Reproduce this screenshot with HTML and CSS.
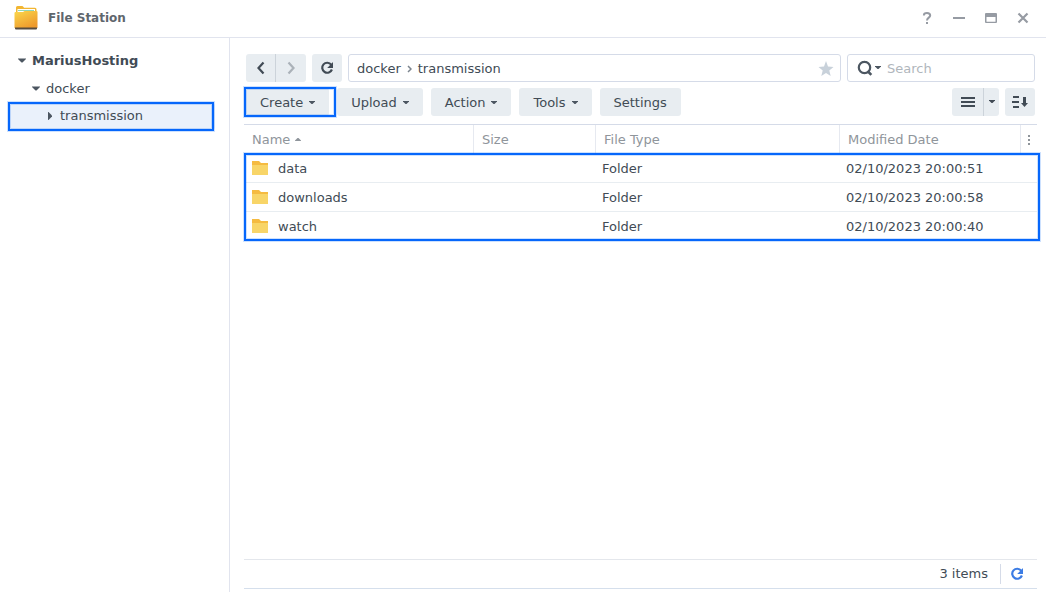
FILE: index.html
```html
<!DOCTYPE html>
<html lang="en">
<head>
<meta charset="utf-8">
<title>File Station</title>
<meta name="viewport" content="width=device-width, initial-scale=1">
<link rel="stylesheet" href="styles.css">
</head>
<body>
<div class="window">
  <header class="titlebar">
    <svg class="app-icon" width="24" height="24" viewBox="0 0 24 24" aria-hidden="true">
      <defs>
        <linearGradient id="front" x1="0" y1="0" x2=".6" y2="1">
          <stop offset="0" stop-color="#fbd84c"/>
          <stop offset="1" stop-color="#ee9a2c"/>
        </linearGradient>
      </defs>
      <path d="M2 1.500Q2 0 3.500 0H8q1 0 1.500 1l.5.800H21q1.500 0 1.500 1.500V12H2Z" fill="#f2b632"/>
      <path d="M3.500 3H21V8H3.500Z" fill="#fff"/>
      <path d="M4 4.500H20" stroke="#8fd6b8"/>
      <path d="M.5 7q0-1 1-1H9l1.500-1H22.500q1 0 1 1L23.500 22H.5Z" fill="url(#front)"/>
      <path d="M1 21.500H23v1q0 1-1 1H2q-1 0-1-1Z" fill="#574c40"/>
    </svg>
    <h1 class="title">File Station</h1>
    <div class="window-controls">
      <button class="window-button" type="button" aria-label="Help">
        <svg width="16" height="16" viewBox="0 0 16 16"><path d="M4.900 5.500V5.200C4.900 3.800 6.200 3 8 3s3.200.9 3.200 2.500C11.200 7.600 8 7.700 8 10.500" fill="none" stroke="currentColor" stroke-width="2"/><path d="M7 12h2v2H7z" fill="currentColor"/></svg>
      </button>
      <button class="window-button" type="button" aria-label="Minimize">
        <svg width="16" height="16" viewBox="0 0 16 16"><path d="M2 7h12v2H2z" fill="currentColor"/></svg>
      </button>
      <button class="window-button" type="button" aria-label="Maximize">
        <svg width="16" height="16" viewBox="0 0 16 16"><path fill-rule="evenodd" d="M3 3h10q1 0 1 1v8q0 1-1 1H3q-1 0-1-1V4q0-1 1-1ZM3.500 7v4.700h9V7Z" fill="currentColor"/></svg>
      </button>
      <button class="window-button" type="button" aria-label="Close">
        <svg width="16" height="16" viewBox="0 0 16 16"><path d="M3.500 3.500l9 9M12.500 3.500l-9 9" stroke="currentColor" stroke-width="2.200"/></svg>
      </button>
    </div>
  </header>

  <div class="body">
    <nav class="sidebar" aria-label="Folders">
      <ul class="tree">
        <li><a class="node node-root" href="#"><svg class="twisty" width="8" height="8" viewBox="0 0 8 8"><path d="M0 1.500h8v.5L4.500 5.500h-1L0 2Z"/></svg>MariusHosting</a></li>
        <li><a class="node node-share" href="#"><svg class="twisty" width="8" height="8" viewBox="0 0 8 8"><path d="M0 1.500h8v.5L4.500 5.500h-1L0 2Z"/></svg>docker</a></li>
        <li><a class="node node-child marked" href="#" aria-current="true"><svg class="twisty" width="8" height="8" viewBox="0 0 8 8"><path d="M2 0h.5L6 3.500v1L2.500 8H2Z"/></svg>transmission</a></li>
      </ul>
    </nav>

    <main class="content">
      <div class="toolbars">
        <div class="bar">
          <div class="split">
            <button class="button icon-button" type="button" aria-label="Back"><svg width="16" height="16" viewBox="0 0 16 16"><path d="M10.500 2.500 5.500 8l5 5.500" fill="none" stroke="currentColor" stroke-width="2.200"/></svg></button>
            <button class="button icon-button" type="button" aria-label="Forward" disabled><svg width="16" height="16" viewBox="0 0 16 16"><path d="M5.500 2.500l5 5.500-5 5.500" fill="none" stroke="currentColor" stroke-width="2.200"/></svg></button>
          </div>
          <button class="button icon-button" type="button" aria-label="Refresh"><svg width="16" height="16" viewBox="0 0 16 16"><path d="M12.200 4.700A5 5 0 1 0 12.900 9.500" fill="none" stroke="currentColor" stroke-width="2.200"/><path d="M14 2v6H8.200Z" fill="currentColor"/></svg></button>
          <div class="path">
            <a class="crumb" href="#">docker</a>
            <svg class="crumb-arrow" width="5" height="8" viewBox="0 0 5 8"><path d="M1 1l3 3-3 3" fill="none" stroke="currentColor" stroke-width="1.500"/></svg>
            <a class="crumb" href="#">transmission</a>
            <button class="star" type="button" aria-label="Add to favorites"><svg width="16" height="16" viewBox="0 0 16 16"><path d="M8 0l2 5.500 5.500.400-4.200 3.500L12.700 15 8 12 3.300 15l1.400-5.600L.5 5.900 6 5.500Z" fill="currentColor"/></svg></button>
          </div>
          <div class="search">
            <button class="search-options" type="button" aria-label="Search options">
              <svg width="16" height="16" viewBox="0 0 16 16"><circle cx="7.500" cy="7.500" r="5.700" fill="none" stroke="currentColor" stroke-width="2.200"/><path d="M10.500 11l3.800 3.800" stroke="currentColor" stroke-width="2.600"/></svg>
              <svg class="caret" width="6" height="4" viewBox="0 0 6 4"><path d="M0 0h6v.5L3.500 3h-1L0 .5Z"/></svg>
            </button>
            <input class="search-input" type="text" placeholder="Search" aria-label="Search">
          </div>
        </div>

        <div class="bar">
          <div class="actions">
            <button class="button marked" type="button">Create<svg class="caret" width="6" height="4" viewBox="0 0 6 4"><path d="M0 0h6v.5L3.500 3h-1L0 .5Z"/></svg></button>
            <button class="button" type="button">Upload<svg class="caret" width="6" height="4" viewBox="0 0 6 4"><path d="M0 0h6v.5L3.500 3h-1L0 .5Z"/></svg></button>
            <button class="button" type="button">Action<svg class="caret" width="6" height="4" viewBox="0 0 6 4"><path d="M0 0h6v.5L3.500 3h-1L0 .5Z"/></svg></button>
            <button class="button" type="button">Tools<svg class="caret" width="6" height="4" viewBox="0 0 6 4"><path d="M0 0h6v.5L3.500 3h-1L0 .5Z"/></svg></button>
            <button class="button" type="button">Settings</button>
          </div>
          <div class="split">
            <button class="button view-button" type="button" aria-label="List view"><svg width="14" height="10" viewBox="0 0 14 10"><path d="M0 0h14v2H0zM0 4h14v2H0zM0 8h14v2H0z" fill="currentColor"/></svg></button>
            <button class="button view-menu" type="button" aria-label="View options"><svg width="6" height="4" viewBox="0 0 6 4"><path d="M0 0h6v.5L3.500 3h-1L0 .5Z" fill="currentColor"/></svg></button>
          </div>
          <button class="button icon-button" type="button" aria-label="Sort"><svg width="16" height="12" viewBox="0 0 16 12"><path d="M1 0h6v2H1zM0 5h7v2H0zM1 10h6v2H1zM11 1h3v6h2l-3.500 4L9 7h2Z" fill="currentColor"/></svg></button>
        </div>
      </div>

      <div class="listing">
        <table class="files">
          <colgroup>
            <col><col class="col-size"><col class="col-type"><col class="col-date"><col class="col-menu">
          </colgroup>
          <thead>
            <tr>
              <th scope="col">Name<svg class="sort" width="6" height="4" viewBox="0 0 6 4"><path d="M0 4v-.5L2.500 1h1L6 3.500V4Z"/></svg></th>
              <th scope="col">Size</th>
              <th scope="col">File Type</th>
              <th scope="col">Modified Date</th>
              <th scope="col" class="menu-cell"><button class="columns" type="button" aria-label="Choose columns"><svg width="2" height="10" viewBox="0 0 2 10"><path d="M0 0h2v2H0zM0 4h2v2H0zM0 8h2v2H0z" fill="currentColor"/></svg></button></th>
            </tr>
          </thead>
          <tbody>
            <tr>
              <td><span class="name"><svg width="16" height="16" viewBox="0 0 16 16"><path d="M0 0h7l2 2h7v4H0Z" fill="#f5bb41"/><path d="M0 4h16v10H0z" fill="#f8d568"/></svg>data</span></td>
              <td></td><td>Folder</td><td colspan="2">02/10/2023 20:00:51</td>
            </tr>
            <tr>
              <td><span class="name"><svg width="16" height="16" viewBox="0 0 16 16"><path d="M0 0h7l2 2h7v4H0Z" fill="#f5bb41"/><path d="M0 4h16v10H0z" fill="#f8d568"/></svg>downloads</span></td>
              <td></td><td>Folder</td><td colspan="2">02/10/2023 20:00:58</td>
            </tr>
            <tr>
              <td><span class="name"><svg width="16" height="16" viewBox="0 0 16 16"><path d="M0 0h7l2 2h7v4H0Z" fill="#f5bb41"/><path d="M0 4h16v10H0z" fill="#f8d568"/></svg>watch</span></td>
              <td></td><td>Folder</td><td colspan="2">02/10/2023 20:00:40</td>
            </tr>
          </tbody>
        </table>
      </div>

      <footer class="status">
        <span class="count">3 items</span>
        <button class="reload" type="button" aria-label="Reload"><svg width="16" height="16" viewBox="0 0 16 16"><path d="M12.200 4.700A5 5 0 1 0 12.900 9.500" fill="none" stroke="currentColor" stroke-width="2.200"/><path d="M14 2v6H8.200Z" fill="currentColor"/></svg></button>
      </footer>
    </main>
  </div>
</div>
</body>
</html>
```

FILE: styles.css
```css
* { box-sizing: border-box; }

body {
  margin: 0;
  background: #fff;
  color: #414b55;
  font: 13px/20px Verdana, "DejaVu Sans", sans-serif;
}

button, input {
  margin: 0;
  padding: 0;
  border: 0;
  background: none;
  color: inherit;
  font: inherit;
}

a { color: inherit; text-decoration: none; }
svg { display: block; flex: none; }

.window { display: flex; flex-direction: column; min-height: 100vh; }

.titlebar {
  display: flex;
  align-items: center;
  height: 38px;
  padding: 0 15px 2px 14px;
  border-bottom: 1px solid #e1e4ee;
}

.title {
  flex: 1;
  margin: 0 0 0 10px;
  color: #5f666d;
  font-size: 12px;
  line-height: 20px;
}

.window-controls { display: flex; gap: 16px; color: #969ba3; }

.body { display: flex; flex: 1; }

.sidebar {
  flex: none;
  width: 230px;
  padding: 9px 14px 0 10px;
  border-right: 1px solid #e1e4ee;
}

.tree { margin: 0; padding: 0; list-style: none; }

.node {
  display: flex;
  align-items: center;
  gap: 6px;
  height: 28px;
  border-radius: 3px;
}

.node-root { padding-left: 8px; font-weight: bold; }
.node-share { padding-left: 22px; }
.node-child { height: 27px; padding: 0 0 1px 36px; background: #eaf1fb; }
.twisty { fill: #4c5661; }

/* Blue frame that calls out an element without affecting its layout. */
.marked { position: relative; }
.marked::after {
  position: absolute;
  border: 2px solid #0667fb;
  box-shadow: 0 0 0 1px #0667fb33, inset 0 0 0 1px #0667fb33;
  content: "";
}

.node-child.marked::after { inset: -1px 1px -1px -2px; }
.button.marked::after { inset: -1px -7px -1px -2px; }

.content {
  display: flex;
  flex: 1;
  flex-direction: column;
  min-width: 0;
  padding: 16px 9px 3px 14px;
}

.toolbars {
  display: flex;
  flex-direction: column;
  gap: 6px;
  padding: 0 2px 8px;
}

.bar { display: flex; gap: 6px; }
.actions { display: flex; flex: 1; gap: 8px; }

.button {
  display: flex;
  align-items: center;
  justify-content: center;
  height: 28px;
  padding: 0 14px;
  border-radius: 3px;
  background: #e8edf1;
}

.actions .button { padding-top: 2px; }

.caret { margin-left: 6px; fill: #4c5661; }
.icon-button { width: 30px; padding: 0; }
.button:disabled { color: #abb2b9; }

.split { display: flex; }
.split .button:first-child {
  border-right: 1px solid #ccd3da;
  border-radius: 3px 0 0 3px;
}
.split .button:last-child { border-radius: 0 3px 3px 0; }

.view-button { width: 32px; padding: 0; }
.view-menu { width: 15px; padding: 0; }

.path, .search {
  display: flex;
  align-items: center;
  height: 28px;
  border: 1px solid #d5dbe8;
  border-radius: 3px;
}

.path { flex: 1; gap: 6px; padding: 2px 6px 0 8px; }
.crumb-arrow { color: #7c858f; }
.star { margin-left: auto; color: #c8d1da; }

.search { width: 188px; padding-left: 9px; }
.search-options { display: flex; align-items: center; color: #4c5661; }
.search-options .caret { margin-left: 2px; }
.search-input { flex: 1; width: 0; min-width: 0; padding: 2px 0 0 6px; outline: 0; }
.search-input::placeholder { color: #b0b6bc; opacity: 1; }

.listing { flex: 1; }

.files {
  width: 100%;
  border-top: 1px solid #d5dbe8;
  border-collapse: separate;
  border-spacing: 0;
  table-layout: fixed;
}

.col-size { width: 122px; }
.col-type { width: 244px; }
.col-date { width: 181px; }
.col-menu { width: 16px; }

th {
  height: 29px;
  padding: 0 8px;
  border-right: 1px solid #e6e9f0;
  color: #8f959b;
  font-weight: normal;
  text-align: left;
}

th:last-child { border-right: 0; }
.menu-cell { padding: 0 7px; }
.columns { display: block; }
.sort { display: inline-block; margin: 0 0 3px 5px; fill: #8f959b; }

td { height: 29px; padding: 2px 6px 0; border-bottom: 1px solid #e8edf1; }
td:first-child { padding-left: 8px; }
.name { display: flex; align-items: center; gap: 10px; }

tbody { position: relative; }
tbody::after {
  position: absolute;
  inset: -1px -3px 0 0;
  border: 2px solid #0667fb;
  box-shadow: 0 0 0 1px #0667fb33, inset 0 0 0 1px #0667fb33;
  content: "";
}

.status {
  display: flex;
  align-items: center;
  justify-content: flex-end;
  height: 30px;
  border-top: 1px solid #e4e7ec;
  border-bottom: 1px solid #d5dfec;
}

.count { padding-right: 12px; border-right: 1px solid #d5dbe8; }
.reload { padding: 0 12px 0 8px; color: #3c7ce4; }
```
